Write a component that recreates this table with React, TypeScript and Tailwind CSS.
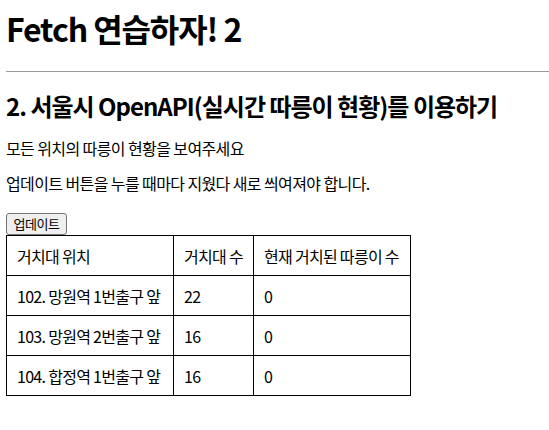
const rows = [
  { name: '102. 망원역 1번출구 앞', total: 22, parked: 0 },
  { name: '103. 망원역 2번출구 앞', total: 16, parked: 0 },
  { name: '104. 합정역 1번출구 앞', total: 16, parked: 0 },
];

export default function App() {
  return (
    <div className="min-h-screen bg-white pl-[6px] text-black [font-family:'Noto_Sans_CJK_KR','Noto_Sans',sans-serif]">
      <h1 className="pt-[5px] text-[32px] font-bold leading-[46px] tracking-[-1.1px]">Fetch 연습하자! 2</h1>
      <hr className="mt-[20px] border-t border-[#9a9a9a]" />
      <h2 className="mt-[17px] text-[24px] font-bold leading-[34px] tracking-[-1px]">
        2. 서울시 OpenAPI(실시간 따릉이 현황)를 이용하기
      </h2>
      <p className="mt-[14px] text-[16px] leading-[23px] tracking-[-0.6px]">모든 위치의 따릉이 현황을 보여주세요</p>
      <p className="mt-[12px] text-[16px] leading-[23px] tracking-[-0.6px]">
        업데이트 버튼을 누를 때마다 지웠다 새로 씌여져야 합니다.
      </p>
      <button className="mt-[18px] block h-[22px] w-[61px] rounded-[3px] border border-[#767676] bg-[#efefef] text-[13px] leading-[18px] tracking-[-0.5px]">
        업데이트
      </button>
      <table className="w-[405px] border-collapse border border-black text-[16px] tracking-[-0.7px]">
        <thead>
          <tr className="h-[40px]">
            <th className="w-[167px] whitespace-nowrap border border-black px-[10px] text-left font-normal">거치대 위치</th>
            <th className="w-[80px] whitespace-nowrap border border-black px-[10px] text-left font-normal">거치대 수</th>
            <th className="whitespace-nowrap border border-black px-[10px] text-left font-normal">현재 거치된 따릉이 수</th>
          </tr>
        </thead>
        <tbody>
          {rows.map((r) => (
            <tr key={r.name} className="h-[40px]">
              <td className="whitespace-nowrap border border-black px-[10px]">{r.name}</td>
              <td className="border border-black px-[10px]">{r.total}</td>
              <td className="border border-black px-[10px]">{r.parked}</td>
            </tr>
          ))}
        </tbody>
      </table>
    </div>
  );
}
